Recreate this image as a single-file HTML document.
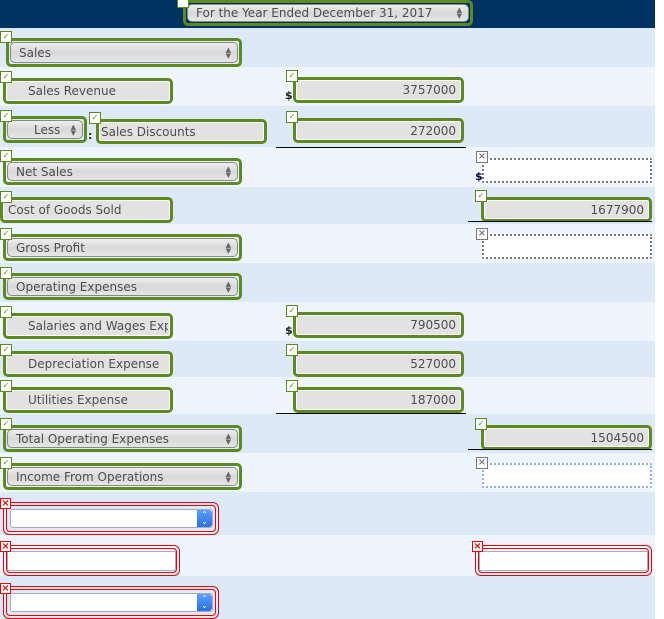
<!DOCTYPE html>
<html><head><meta charset="utf-8"><style>
*{box-sizing:border-box;margin:0;padding:0}
body{width:664px;height:619px;background:#fff;position:relative;overflow:hidden;font-family:"DejaVu Sans","Liberation Sans",sans-serif;font-size:12px;color:#4d4d4d}
.a{position:absolute}
.band{position:absolute;left:0;width:655px}
.d{background:#dde9f7}.l{background:#eef5fd}
.g{position:absolute;border:3px solid #5b8a1e;border-radius:5px;background:#e2e2e2;box-shadow:inset 0 0 0 1px #fff}
.g span{position:absolute;top:50%;transform:translateY(-50%);white-space:nowrap;overflow:hidden}
.sel{position:absolute;border:3px solid #5b8a1e;border-radius:5px;padding:1px}
.sel div{width:100%;height:100%;border:1px solid #888;border-radius:5px;background:linear-gradient(#eee,#d8d8d8 50%,#e6e6e6);position:relative}
.sel span{position:absolute;left:8px;top:50%;transform:translateY(-50%);white-space:nowrap}
.sel i{position:absolute;right:6px;top:50%;transform:translateY(-50%);font-style:normal;font-size:7px;line-height:6px;color:#666}
.ck{position:absolute;width:12px;height:12px;border:1px solid #5b8a1e;background:#fff;font-size:8px;line-height:9px;text-align:center;color:#5b8a1e}
.xk{position:absolute;width:12px;height:12px;border:1px solid #777;background:#fff;font-size:10px;line-height:10px;text-align:center;color:#777;font-weight:bold}
.rk{position:absolute;width:11px;height:11px;border:1px solid #e00;background:#fff;font-size:10px;line-height:9px;text-align:center;color:#e00;font-weight:bold}
.dot{position:absolute;border:2px dotted #777;background:#fff;border-radius:2px}
.r{text-align:right}
.ln{position:absolute;height:1px;background:#000}
.red{position:absolute;border:1px solid #e00;border-radius:6px}
.red>div{position:absolute;inset:2px;border:1px solid #e00;border-radius:4px}
.ws{position:absolute;background:#fff;border:1px solid #aab;border-radius:3px}
.bl{position:absolute;right:0;top:0;bottom:0;width:15px;background:linear-gradient(#5aa0ff,#2a70e0);border-radius:0 3px 3px 0;color:#fff;font-size:8px;line-height:7px;text-align:center;padding-top:1px}
.dl{position:absolute;font-size:11px;font-weight:bold;color:#222}
</style></head><body>
<div class="band" style="top:0;height:28px;background:#003363"></div>
<div class="band d" style="top:28px;height:39px"></div>
<div class="band l" style="top:67px;height:39px"></div>
<div class="band d" style="top:106px;height:41px"></div>
<div class="band l" style="top:147px;height:40px"></div>
<div class="band d" style="top:187px;height:37px"></div>
<div class="band l" style="top:224px;height:39px"></div>
<div class="band d" style="top:263px;height:39px"></div>
<div class="band l" style="top:302px;height:39px"></div>
<div class="band d" style="top:341px;height:36px"></div>
<div class="band l" style="top:377px;height:37px"></div>
<div class="band d" style="top:414px;height:39px"></div>
<div class="band l" style="top:453px;height:39px"></div>
<div class="band d" style="top:492px;height:43px"></div>
<div class="band l" style="top:535px;height:41px"></div>
<div class="band d" style="top:576px;height:43px"></div>

<div class="sel" style="left:183px;top:0;width:290px;height:26px"><div><span>For the Year Ended December 31, 2017</span><i>▲<br>▼</i></div></div>
<div class="ck" style="left:177px;top:-4px"></div>

<div class="sel" style="left:6px;top:38px;width:236px;height:29px"><div><span>Sales</span><i>▲<br>▼</i></div></div>
<div class="ck" style="left:0;top:31px">✓</div>

<div class="g" style="left:3px;top:78px;width:170px;height:26px"><span style="left:22px">Sales Revenue</span></div>
<div class="ck" style="left:0;top:71px">✓</div>
<div class="dl" style="left:285px;top:89px">$</div>
<div class="g r" style="left:293px;top:77px;width:171px;height:26px"><span style="right:5px">3757000</span></div>
<div class="ck" style="left:286px;top:70px">✓</div>

<div class="sel" style="left:3px;top:116px;width:84px;height:27px"><div><span style="left:26px">Less</span><i>▲<br>▼</i></div></div>
<div class="ck" style="left:0;top:110px">✓</div>
<div class="dl" style="left:88px;top:129px">:</div>
<div class="g" style="left:96px;top:119px;width:171px;height:25px"><span style="left:2px">Sales Discounts</span></div>
<div class="ck" style="left:89px;top:112px">✓</div>
<div class="g" style="left:293px;top:118px;width:171px;height:25px"><span style="right:5px">272000</span></div>
<div class="ck" style="left:286px;top:111px">✓</div>
<div class="ln" style="left:276px;top:147px;width:190px"></div>

<div class="sel" style="left:3px;top:158px;width:239px;height:27px"><div><span>Net Sales</span><i>▲<br>▼</i></div></div>
<div class="ck" style="left:0;top:150px">✓</div>
<div class="dot" style="left:482px;top:158px;width:170px;height:25px"></div>
<div class="xk" style="left:476px;top:151px">×</div>
<div class="dl" style="left:475px;top:170px;color:#003">$</div>

<div class="g" style="left:0;top:197px;width:173px;height:26px"><span style="left:5px">Cost of Goods Sold</span></div>
<div class="ck" style="left:0;top:191px">✓</div>
<div class="g" style="left:481px;top:197px;width:171px;height:25px"><span style="right:5px">1677900</span></div>
<div class="ck" style="left:475px;top:190px">✓</div>
<div class="ln" style="left:468px;top:221px;width:184px"></div>

<div class="sel" style="left:3px;top:234px;width:239px;height:27px"><div><span>Gross Profit</span><i>▲<br>▼</i></div></div>
<div class="ck" style="left:0;top:228px">✓</div>
<div class="dot" style="left:482px;top:234px;width:170px;height:25px"></div>
<div class="xk" style="left:476px;top:228px">×</div>

<div class="sel" style="left:3px;top:273px;width:239px;height:27px"><div><span>Operating Expenses</span><i>▲<br>▼</i></div></div>
<div class="ck" style="left:0;top:267px">✓</div>

<div class="g" style="left:3px;top:313px;width:170px;height:26px"><span style="left:22px;right:2px">Salaries and Wages Exp</span></div>
<div class="ck" style="left:0;top:306px">✓</div>
<div class="dl" style="left:285px;top:324px">$</div>
<div class="g" style="left:293px;top:312px;width:171px;height:26px"><span style="right:5px">790500</span></div>
<div class="ck" style="left:286px;top:305px">✓</div>

<div class="g" style="left:3px;top:351px;width:170px;height:26px"><span style="left:22px">Depreciation Expense</span></div>
<div class="ck" style="left:0;top:344px">✓</div>
<div class="g" style="left:293px;top:351px;width:171px;height:26px"><span style="right:5px">527000</span></div>
<div class="ck" style="left:286px;top:344px">✓</div>

<div class="g" style="left:3px;top:387px;width:170px;height:26px"><span style="left:22px">Utilities Expense</span></div>
<div class="ck" style="left:0;top:380px">✓</div>
<div class="g" style="left:293px;top:387px;width:171px;height:26px"><span style="right:5px">187000</span></div>
<div class="ck" style="left:286px;top:380px">✓</div>
<div class="ln" style="left:276px;top:413px;width:190px"></div>

<div class="sel" style="left:3px;top:425px;width:239px;height:27px"><div><span>Total Operating Expenses</span><i>▲<br>▼</i></div></div>
<div class="ck" style="left:0;top:418px">✓</div>
<div class="g" style="left:481px;top:425px;width:171px;height:25px"><span style="right:5px">1504500</span></div>
<div class="ck" style="left:475px;top:418px">✓</div>
<div class="ln" style="left:468px;top:449px;width:184px"></div>

<div class="sel" style="left:3px;top:463px;width:239px;height:27px"><div><span>Income From Operations</span><i>▲<br>▼</i></div></div>
<div class="ck" style="left:0;top:457px">✓</div>
<div class="dot" style="left:482px;top:463px;width:170px;height:25px;border-color:#8ab0e0"></div>
<div class="xk" style="left:476px;top:457px">×</div>

<div class="red" style="left:3px;top:502px;width:216px;height:33px"><div></div></div>
<div class="ws" style="left:10px;top:509px;width:203px;height:19px"><div class="bl">⌃<br>⌄</div></div>
<div class="rk" style="left:0;top:498px">×</div>

<div class="red" style="left:3px;top:545px;width:177px;height:31px"><div></div></div>
<div class="ws" style="left:7px;top:551px;width:169px;height:20px;border-radius:1px"></div>
<div class="rk" style="left:0;top:541px">×</div>
<div class="red" style="left:475px;top:545px;width:177px;height:31px"><div></div></div>
<div class="ws" style="left:479px;top:551px;width:169px;height:20px;border-radius:1px"></div>
<div class="rk" style="left:472px;top:541px">×</div>

<div class="red" style="left:3px;top:586px;width:216px;height:33px"><div></div></div>
<div class="ws" style="left:10px;top:593px;width:203px;height:19px"><div class="bl">⌃<br>⌄</div></div>
<div class="rk" style="left:0;top:583px">×</div>
</body></html>
